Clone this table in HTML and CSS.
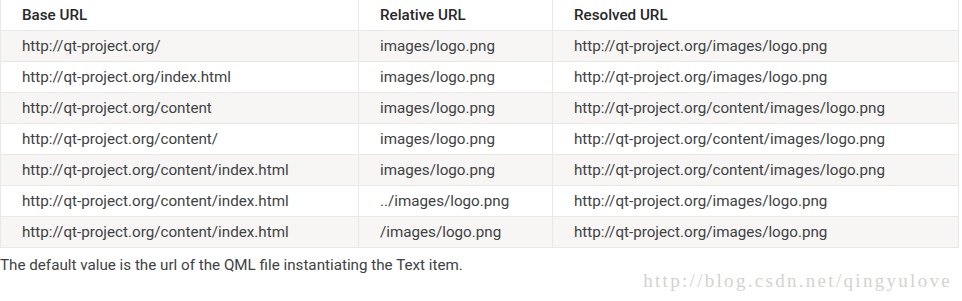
FILE: index.html
```html
<!DOCTYPE html>
<html lang="en">
<head>
    <meta charset="UTF-8">
    <title>QML url resolution</title>
    <link rel="stylesheet" href="styles.css">
</head>
<body>
    <table class="url-table">
        <thead>
            <tr>
                <th class="col-base">Base URL</th>
                <th class="col-rel">Relative URL</th>
                <th>Resolved URL</th>
            </tr>
        </thead>
        <tbody>
            <tr class="odd">
                <td>http://qt-project.org/</td>
                <td>images/logo.png</td>
                <td>http://qt-project.org/images/logo.png</td>
            </tr>
            <tr>
                <td>http://qt-project.org/index.html</td>
                <td>images/logo.png</td>
                <td>http://qt-project.org/images/logo.png</td>
            </tr>
            <tr class="odd">
                <td>http://qt-project.org/content</td>
                <td>images/logo.png</td>
                <td>http://qt-project.org/content/images/logo.png</td>
            </tr>
            <tr>
                <td>http://qt-project.org/content/</td>
                <td>images/logo.png</td>
                <td>http://qt-project.org/content/images/logo.png</td>
            </tr>
            <tr class="odd">
                <td>http://qt-project.org/content/index.html</td>
                <td>images/logo.png</td>
                <td>http://qt-project.org/content/images/logo.png</td>
            </tr>
            <tr>
                <td>http://qt-project.org/content/index.html</td>
                <td>../images/logo.png</td>
                <td>http://qt-project.org/images/logo.png</td>
            </tr>
            <tr class="odd">
                <td>http://qt-project.org/content/index.html</td>
                <td>/images/logo.png</td>
                <td>http://qt-project.org/images/logo.png</td>
            </tr>
        </tbody>
    </table>
    <div class="footer">
        <p class="note">The default value is the url of the QML file instantiating the Text item.</p>
        <span class="watermark">http://blog.csdn.net/qingyulove</span>
    </div>
</body>
</html>
```

FILE: styles.css
```css
* { box-sizing: border-box; }
body {
    margin: 0;
    background: #fff;
    font-family: 'Roboto', sans-serif;
    font-size: 15.2px;
    color: #404244;
}

.url-table {
    width: 959px;
    border-collapse: collapse;
    border: 1px solid #e8e8e6;
    border-top: none;
}
.url-table th,
.url-table td {
    height: 31px;
    padding: 0 0 0 21px;
    text-align: left;
    border: 1px solid #e8e8e6;
    white-space: nowrap;
}
.url-table th {
    height: 30px;
    border-top: none;
    font-weight: 500;
    color: #26282a;
}
.url-table .col-base { width: 358px; }
.url-table .col-rel { width: 194px; }
.url-table tr.odd td {
    background: #f7f6f4;
}

.footer {
    display: flex;
    justify-content: space-between;
    align-items: flex-start;
    padding: 8px 10px 0 0;
}
.note {
    margin: 0;
}
.watermark {
    margin-top: 14px;
    font-family: 'Liberation Serif', serif;
    font-size: 19px;
    letter-spacing: 2.3px;
    color: #d3d3cf;
}
```
